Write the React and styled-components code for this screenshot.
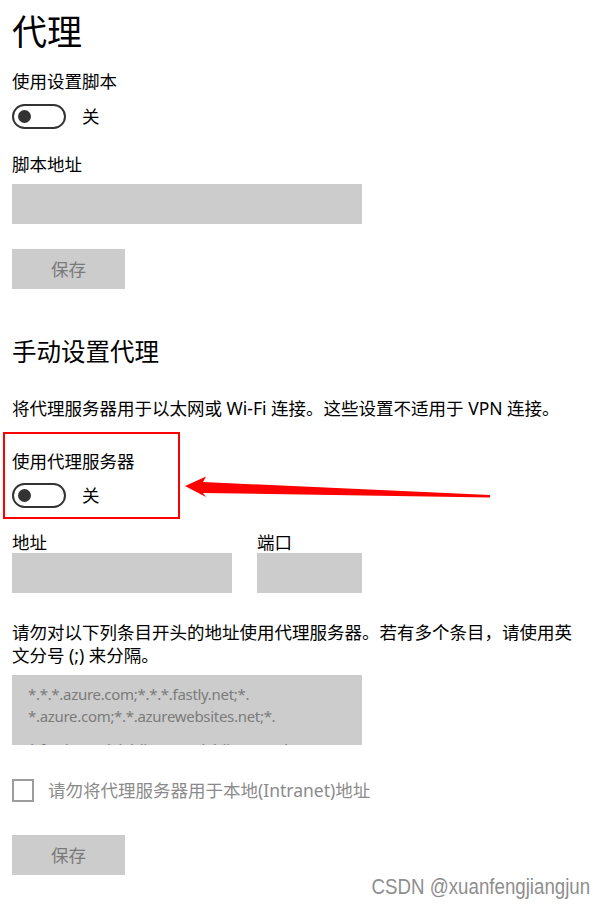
import React from "react";
import styled, { createGlobalStyle } from "styled-components";

const Global = createGlobalStyle`
  html, body { margin: 0; padding: 0; background: #ffffff; }
  body { font-family: "Noto Sans", "Noto Sans CJK SC", sans-serif; color: #000; }
  * { box-sizing: border-box; }
`;

const Page = styled.div`
  position: relative;
  width: 605px;
  height: 905px;
  overflow: hidden;
  padding: 12px 20px 0 12px;
  display: flex;
  flex-direction: column;
  align-items: flex-start;
`;

const Title = styled.h1`
  margin: 0;
  font-size: 35px;
  font-weight: 400;
  line-height: 40px;
  color: #000;
`;

const SubTitle = styled.h2`
  margin: ${(p) => p.$mt}px 0 0;
  font-size: 24.5px;
  font-weight: 400;
  line-height: 32px;
  color: #000;
`;

const Label = styled.div`
  margin-top: ${(p) => p.$mt || 0}px;
  font-size: 17.5px;
  line-height: ${(p) => p.$lh || 24}px;
  color: #000;
  white-space: nowrap;
`;

const Paragraph = styled.p`
  margin: ${(p) => p.$mt}px 0 0;
  font-size: 17.5px;
  line-height: ${(p) => p.$lh || 24}px;
  color: #000;
`;

const ToggleRow = styled.div`
  margin-top: ${(p) => p.$mt}px;
  display: flex;
  align-items: center;
  gap: 16px;
  height: 25px;
`;

const Track = styled.div`
  width: 54px;
  height: 25px;
  border: 2px solid #333333;
  border-radius: 13px;
  display: flex;
  align-items: center;
  padding-left: 3.5px;
`;

const Knob = styled.div`
  width: 13px;
  height: 13px;
  border-radius: 50%;
  background: #333333;
`;

const ToggleText = styled.span`
  font-size: 17.5px;
  line-height: 25px;
  color: #000;
`;

const Input = styled.div`
  margin-top: ${(p) => p.$mt || 0}px;
  width: ${(p) => p.$w}px;
  height: 40px;
  background: #cccccc;
`;

const Button = styled.button`
  margin-top: ${(p) => p.$mt}px;
  width: 113px;
  height: 40px;
  border: none;
  padding: 0;
  background: #cccccc;
  color: #7a7a7a;
  font-family: "Noto Sans", "Noto Sans CJK SC", sans-serif;
  font-size: 17.5px;
  line-height: 40px;
  text-align: center;
`;

const Highlight = styled.div`
  margin: 12px 0 0 -9px;
  width: 177px;
  height: 87px;
  border: 2px solid #ff0000;
  padding: 14.5px 0 0 7px;
`;

const FieldGrid = styled.div`
  margin-top: 13px;
  display: grid;
  grid-template-columns: 220px 105px;
  column-gap: 25px;
`;

const Field = styled.div`
  display: flex;
  flex-direction: column;
  gap: 1px;
`;

const TextArea = styled.div`
  margin-top: 8px;
  width: 350px;
  height: 70px;
  background: #cccccc;
  padding: 8px 0 0 16px;
  overflow: hidden;
`;

const AreaLine = styled.div`
  margin-top: ${(p) => p.$mt || 0}px;
  font-family: "Noto Sans", sans-serif;
  font-size: 15px;
  letter-spacing: -0.3px;
  line-height: 22px;
  color: #7b7b7b;
  white-space: nowrap;
`;

const CheckRow = styled.label`
  margin-top: 33px;
  display: flex;
  align-items: center;
  gap: 14px;
  height: 24px;
`;

const CheckBox = styled.span`
  width: 22px;
  height: 23px;
  border: 2px solid #9d9d9d;
  background: #ffffff;
`;

const CheckText = styled.span`
  font-size: 17.5px;
  line-height: 24px;
  color: #8b8b8b;
  white-space: nowrap;
`;

const Watermark = styled.div`
  align-self: flex-end;
  margin: 0 -5px 0 0;
  font-family: "Liberation Sans", sans-serif;
  font-size: 22px;
  line-height: 24px;
  color: #8e8e8e;
  white-space: nowrap;
  transform: scaleX(0.85);
  transform-origin: right center;
`;

const ArrowSvg = styled.svg`
  position: absolute;
  left: 180px;
  top: 470px;
  width: 315px;
  height: 32px;
  pointer-events: none;
`;

function Toggle({ mt }) {
  return (
    <ToggleRow $mt={mt}>
      <Track>
        <Knob />
      </Track>
      <ToggleText>关</ToggleText>
    </ToggleRow>
  );
}

export default function App() {
  return (
    <>
      <Global />
      <Page>
        <Title>代理</Title>
        <Label $mt={17}>使用设置脚本</Label>
        <Toggle mt={11} />
        <Label $mt={23}>脚本地址</Label>
        <Input $mt={8} $w={350} />
        <Button $mt={25}>保存</Button>

        <SubTitle $mt={47}>手动设置代理</SubTitle>
        <Paragraph $mt={28}>
          将代理服务器用于以太网或 Wi-Fi 连接。这些设置不适用于 VPN 连接。
        </Paragraph>

        <Highlight>
          <Label>使用代理服务器</Label>
          <Toggle mt={10} />
        </Highlight>

        <FieldGrid>
          <Field>
            <Label $lh={20}>地址</Label>
            <Input $w={220} />
          </Field>
          <Field>
            <Label $lh={20}>端口</Label>
            <Input $w={105} />
          </Field>
        </FieldGrid>

        <Paragraph $mt={28} $lh={23}>
          请勿对以下列条目开头的地址使用代理服务器。若有多个条目，请使用英文分号 (;) 来分隔。
        </Paragraph>

        <TextArea>
          <AreaLine>*.*.*.azure.com;*.*.*.fastly.net;*.</AreaLine>
          <AreaLine>*.azure.com;*.*.azurewebsites.net;*.</AreaLine>
          <AreaLine $mt={11}>*.fastly.net;*.*.*.live.com;*.*.live.com;*.</AreaLine>
        </TextArea>

        <CheckRow>
          <CheckBox />
          <CheckText>请勿将代理服务器用于本地(Intranet)地址</CheckText>
        </CheckRow>

        <Button $mt={33}>保存</Button>
        <Watermark>CSDN @xuanfengjiangjun</Watermark>

        <ArrowSvg viewBox="180 470 315 32">
          <polygon
            fill="#ff0000"
            points="185,486 206,476.5 203,482 490,495 490,497.5 203,493 206,497"
          />
        </ArrowSvg>
      </Page>
    </>
  );
}
